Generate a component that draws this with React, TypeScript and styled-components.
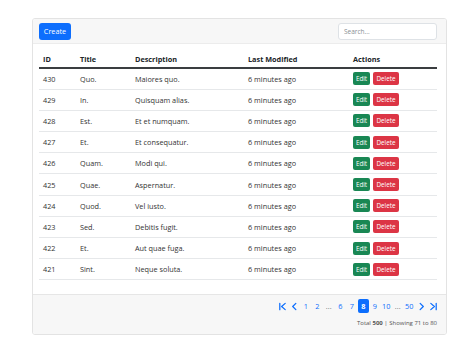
import React from "react";
import styled, { createGlobalStyle } from "styled-components";

const Global = createGlobalStyle`
  html, body { margin: 0; padding: 0; background: #fff; }
  body { font-family: "Segoe UI", "Open Sans", "Noto Sans", sans-serif; color: #212529; }
  * { box-sizing: border-box; }
`;

const Page = styled.div`
  padding: 18px 27px 0 32px;
  width: 474px;
`;

const Card = styled.div`
  width: 415px;
  border: 1px solid #e3e3e3;
  border-radius: 3px;
  background: #fff;
  overflow: hidden;
`;

const CardHeader = styled.div`
  height: 25px;
  background: #f7f7f7;
  border-bottom: 1px solid #ececec;
  display: flex;
  align-items: center;
  justify-content: space-between;
  padding: 0 9px 0 6px;
`;

const PrimaryButton = styled.button`
  height: 17px;
  width: 32px;
  padding: 0;
  border: none;
  border-radius: 3px;
  background: #0d6efd;
  color: #fff;
  font-family: inherit;
  font-size: 7.3px;
  line-height: 17px;
`;

const Search = styled.input`
  width: 99px;
  height: 17px;
  border: 1px solid #dee2e6;
  border-radius: 3px;
  padding: 0 5px;
  font-family: inherit;
  font-size: 6.5px;
  color: #212529;
  background: #fff;
  &::placeholder { color: #8a8f94; }
`;

const CardBody = styled.div`
  padding: 6px 9px 14px 6px;
`;

const Table = styled.table`
  width: 398px;
  border-collapse: collapse;
  font-size: 7.3px;
`;

const Th = styled.th<{ $w: number }>`
  width: ${(p) => p.$w}px;
  text-align: left;
  font-weight: 700;
  padding: 0 4px;
  height: 18px;
  vertical-align: middle;
  border-bottom: 2px solid #3a3d40;
`;

const Td = styled.td`
  padding: 0 4px;
  height: 21.2px;
  vertical-align: middle;
  border-bottom: 1px solid #e6e8ea;
  color: #333;
`;

const Actions = styled.div`
  display: flex;
  gap: 3px;
`;

const SmallButton = styled.button<{ $variant: "edit" | "delete" }>`
  height: 13px;
  width: ${(p) => (p.$variant === "edit" ? 17 : 26)}px;
  padding: 0;
  border: none;
  border-radius: 2px;
  background: ${(p) => (p.$variant === "edit" ? "#198754" : "#dc3545")};
  color: #fff;
  font-family: inherit;
  font-size: 6.3px;
  line-height: 13px;
`;

const CardFooter = styled.div`
  background: #f7f7f7;
  border-top: 1px solid #e6e6e6;
  height: 40px;
  padding: 4px 7px 0 6px;
  display: flex;
  flex-direction: column;
  align-items: flex-end;
`;

const Pager = styled.div`
  display: flex;
  align-items: center;
  height: 14px;
  font-size: 7.3px;
  color: #0d6efd;
`;

const PageItem = styled.span<{ $active?: boolean; $muted?: boolean }>`
  display: inline-flex;
  align-items: center;
  justify-content: center;
  min-width: 11.5px;
  height: 14px;
  padding: 0 1.5px;
  border-radius: 2px;
  background: ${(p) => (p.$active ? "#0d6efd" : "transparent")};
  color: ${(p) => (p.$active ? "#fff" : p.$muted ? "#6c757d" : "#0d6efd")};
  font-weight: ${(p) => (p.$active ? 700 : 400)};
`;

const IconItem = styled.span`
  display: inline-flex;
  align-items: center;
  justify-content: center;
  width: 12px;
  height: 14px;
`;

const Summary = styled.div`
  margin-top: 6px;
  margin-right: 2px;
  font-size: 6px;
  color: #555;
`;

const rows = [
  [430, "Quo.", "Maiores quo."],
  [429, "In.", "Quisquam alias."],
  [428, "Est.", "Et et numquam."],
  [427, "Et.", "Et consequatur."],
  [426, "Quam.", "Modi qui."],
  [425, "Quae.", "Aspernatur."],
  [424, "Quod.", "Vel iusto."],
  [423, "Sed.", "Debitis fugit."],
  [422, "Et.", "Aut quae fuga."],
  [421, "Sint.", "Neque soluta."],
] as const;

const Icon = ({ d }: { d: string }) => (
  <svg width="9" height="9" viewBox="0 0 10 10" fill="none" stroke="#0d6efd" strokeWidth="1.4" strokeLinecap="round" strokeLinejoin="round">
    <path d={d} />
  </svg>
);

export default function App() {
  return (
    <>
      <Global />
      <Page>
        <Card>
          <CardHeader>
            <PrimaryButton>Create</PrimaryButton>
            <Search placeholder="Search..." />
          </CardHeader>
          <CardBody>
            <Table>
              <thead>
                <tr>
                  <Th $w={37}>ID</Th>
                  <Th $w={55}>Title</Th>
                  <Th $w={113}>Description</Th>
                  <Th $w={105}>Last Modified</Th>
                  <Th $w={88}>Actions</Th>
                </tr>
              </thead>
              <tbody>
                {rows.map(([id, title, desc]) => (
                  <tr key={id}>
                    <Td>{id}</Td>
                    <Td>{title}</Td>
                    <Td>{desc}</Td>
                    <Td>6 minutes ago</Td>
                    <Td>
                      <Actions>
                        <SmallButton $variant="edit">Edit</SmallButton>
                        <SmallButton $variant="delete">Delete</SmallButton>
                      </Actions>
                    </Td>
                  </tr>
                ))}
              </tbody>
            </Table>
          </CardBody>
          <CardFooter>
            <Pager>
              <IconItem><Icon d="M2 1.5v7M8 1.5L4 5l4 3.5" /></IconItem>
              <IconItem><Icon d="M6.5 1.5L3 5l3.5 3.5" /></IconItem>
              <PageItem>1</PageItem>
              <PageItem>2</PageItem>
              <PageItem $muted>...</PageItem>
              <PageItem>6</PageItem>
              <PageItem>7</PageItem>
              <PageItem $active>8</PageItem>
              <PageItem>9</PageItem>
              <PageItem>10</PageItem>
              <PageItem $muted>...</PageItem>
              <PageItem>50</PageItem>
              <IconItem><Icon d="M3.5 1.5L7 5l-3.5 3.5" /></IconItem>
              <IconItem><Icon d="M8 1.5v7M2 1.5L6 5l-4 3.5" /></IconItem>
            </Pager>
            <Summary>
              Total <b>500</b> | Showing 71 to 80
            </Summary>
          </CardFooter>
        </Card>
      </Page>
    </>
  );
}
